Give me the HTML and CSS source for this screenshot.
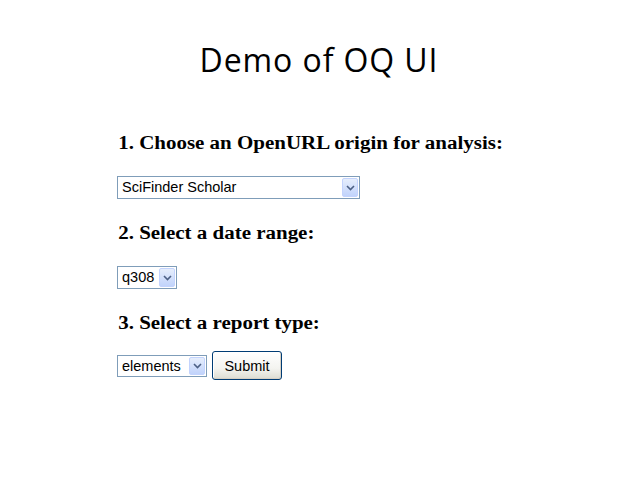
FILE: index.html
```html
<!DOCTYPE html>
<html>
<head>
<meta charset="utf-8">
<link rel="stylesheet" href="styles.css">
</head>
<body>
<main class="slide">
  <h1 class="title">Demo of OQ UI</h1>
  <form class="form">
    <h2 class="label">1. Choose an OpenURL origin for analysis:</h2>
    <div class="row">
      <span class="select select-origin">
        <span class="value">SciFinder Scholar</span>
        <span class="arrow"><svg width="9" height="6" viewBox="0 0 9 6"><path d="M1 1 L4.5 4.5 L8 1" fill="none" stroke="#4d6185" stroke-width="1.6"/></svg></span>
      </span>
    </div>
    <h2 class="label">2. Select a date range:</h2>
    <div class="row">
      <span class="select select-date">
        <span class="value">q308</span>
        <span class="arrow"><svg width="9" height="6" viewBox="0 0 9 6"><path d="M1 1 L4.5 4.5 L8 1" fill="none" stroke="#4d6185" stroke-width="1.6"/></svg></span>
      </span>
    </div>
    <h2 class="label">3. Select a report type:</h2>
    <div class="row row-last">
      <span class="select select-type">
        <span class="value">elements</span>
        <span class="arrow"><svg width="9" height="6" viewBox="0 0 9 6"><path d="M1 1 L4.5 4.5 L8 1" fill="none" stroke="#4d6185" stroke-width="1.6"/></svg></span>
      </span>
      <span class="button">Submit</span>
    </div>
  </form>
</main>
</body>
</html>
```
FILE: styles.css
```css
html, body {
  margin: 0;
  padding: 0;
  background: #ffffff;
}
.slide {
  width: 638px;
  height: 478px;
  overflow: hidden;
}
.title {
  margin: 0;
  padding-top: 44px;
  height: 40px;
  font-family: "Open Sans", "Liberation Sans", sans-serif;
  font-weight: 400;
  font-size: 32px;
  line-height: 32px;
  letter-spacing: 0.9px;
  text-align: center;
  color: #000000;
}
.form {
  display: flex;
  flex-direction: column;
  align-items: flex-start;
  padding-left: 117px;
  margin-top: 49px;
}
.label {
  margin: 0;
  font-family: "Liberation Serif", "Times New Roman", serif;
  font-weight: 700;
  font-size: 18px;
  line-height: 20px;
  height: 20px;
  padding-left: 1px;
  color: #000000;
  transform: scaleX(1.165);
  transform-origin: left center;
  white-space: nowrap;
}
.row {
  display: flex;
  align-items: center;
  gap: 5px;
  margin-top: 23px;
  margin-bottom: 24px;
}
.row-last {
  margin-top: 18px;
}
.select {
  display: flex;
  align-items: stretch;
  box-sizing: border-box;
  height: 23px;
  border: 1px solid #7f9db9;
  background: #ffffff;
  padding: 1px;
}
.select-origin { width: 243px; }
.select-date { width: 60px; }
.select-type { width: 90px; height: 22px; }
.value {
  flex: 1;
  font-family: "Liberation Sans", Arial, sans-serif;
  font-size: 14.5px;
  line-height: 19px;
  padding-left: 3px;
  color: #000000;
  white-space: nowrap;
  overflow: hidden;
}
.arrow {
  width: 16px;
  display: flex;
  align-items: center;
  justify-content: center;
  box-sizing: border-box;
  border: 1px solid #c3d3fd;
  border-radius: 2px;
  background: linear-gradient(to bottom, #e6eefc, #c1d3fb);
}
.button {
  display: flex;
  align-items: center;
  justify-content: center;
  box-sizing: border-box;
  width: 70px;
  height: 29px;
  border: 1px solid #003c74;
  border-radius: 3px;
  background: linear-gradient(to bottom, #ffffff 0%, #f4f4f0 60%, #dcdcd2 100%);
  box-shadow: inset -1px -1px 0 #d6d0c5, inset 1px 1px 0 #ffffff;
  font-family: "Liberation Sans", Arial, sans-serif;
  font-size: 14.5px;
  color: #000000;
}
```
